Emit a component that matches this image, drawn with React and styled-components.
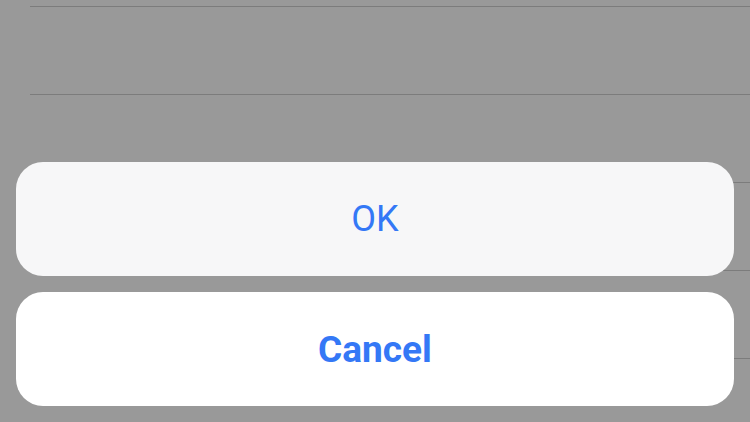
import React from 'react'
import styled, { createGlobalStyle } from 'styled-components'

const GlobalStyle = createGlobalStyle`
	html, body {
		margin: 0;
		padding: 0;
		width: 750px;
		height: 422px;
		overflow: hidden;
		background: #999999;
		font-family: Roboto, "Liberation Sans", sans-serif;
	}
`

const Screen = styled.div`
	position: relative;
	width: 750px;
	height: 422px;
	background: #999999;
	overflow: hidden;
`

const List = styled.div`
	display: flex;
	flex-direction: column;
	padding-left: 30px;
`

const Row = styled.div`
	height: ${props => props.short ? '6px' : '87px'};
	border-bottom: 1px solid #7c7c7c;
	flex-shrink: 0;
`

const Sheet = styled.div`
	position: absolute;
	left: 16px;
	right: 16px;
	bottom: 16px;
	display: flex;
	flex-direction: column;
	gap: 16px;
`

const Group = styled.div`
	height: 114px;
	border-radius: 27px;
	background: ${props => props.cancel ? '#ffffff' : '#f7f7f8'};
	display: flex;
	align-items: center;
	justify-content: center;
`

const Action = styled.button`
	border: none;
	background: none;
	padding: 0;
	font-family: Roboto, "Liberation Sans", sans-serif;
	font-size: ${props => props.bold ? '37px' : '36px'};
	font-weight: ${props => props.bold ? 700 : 400};
	color: #3478f6;
	cursor: pointer;
`

export default function App() {
	const rows = [true, false, false, false, false, false]
	return (
		<Screen>
			<GlobalStyle />
			<List>
				{rows.map((short, i) => (
					<Row key={i} short={short} />
				))}
			</List>
			<Sheet>
				<Group>
					<Action>OK</Action>
				</Group>
				<Group cancel>
					<Action bold>Cancel</Action>
				</Group>
			</Sheet>
		</Screen>
	)
}
